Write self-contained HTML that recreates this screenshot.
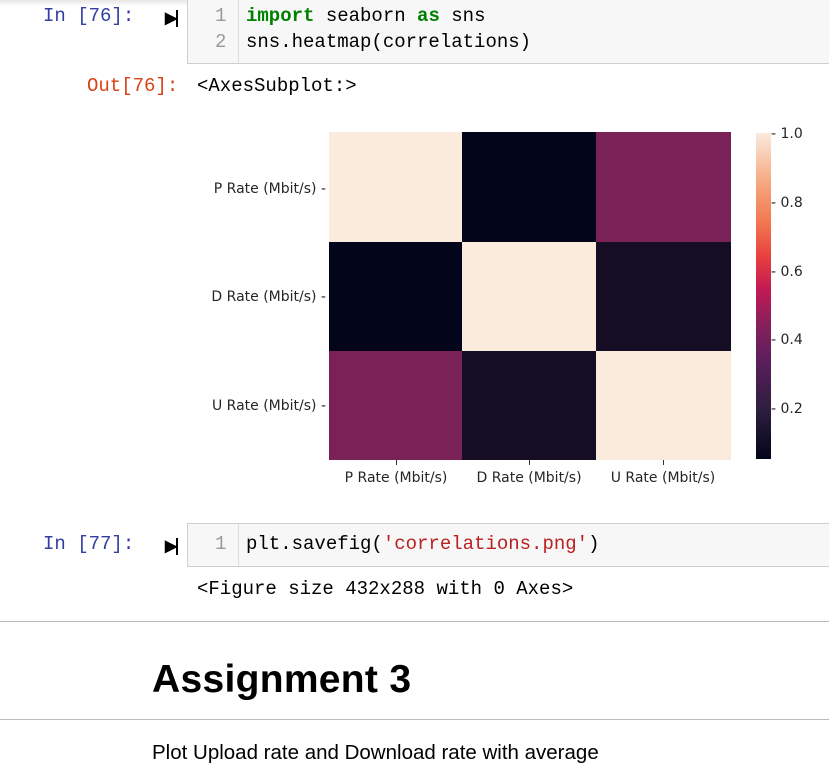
<!DOCTYPE html>
<html><head><meta charset="utf-8"><style>
body{margin:0;width:829px;height:760px;background:#fff;position:relative;overflow:hidden;font-family:"Liberation Sans",sans-serif}
.a{position:absolute;white-space:pre}
.m{font-family:"Liberation Mono",monospace;font-size:19px}
.t{font-family:"DejaVu Sans",sans-serif;font-size:14px;color:#262626}
.c{position:absolute}
</style></head><body>
<div class="c" style="left:0;top:0;width:829px;height:6px;background:linear-gradient(#e6e6e6,#fff)"></div>
<div class="a m" style="left:43px;top:5px;color:#303f9f">In [76]:</div>
<div class="a" style="left:165px;top:8px;font-size:16px;font-weight:bold">▶</div><div class="c" style="left:176px;top:10px;width:2px;height:17px;background:#000"></div>
<div class="c" style="left:187px;top:0;width:650px;height:63px;background:#f7f7f7;border:1px solid #cfcfcf;border-top:none"></div>
<div class="c" style="left:238px;top:0;width:1px;height:63px;background:#ddd"></div>
<div class="a m" style="left:215px;top:5px;color:#999">1</div>
<div class="a m" style="left:215px;top:31px;color:#999">2</div>
<div class="a m" style="left:246px;top:5px;color:#000"><b style="color:#008000">import</b> seaborn <b style="color:#008000">as</b> sns</div>
<div class="a m" style="left:246px;top:31px;color:#000">sns.heatmap(correlations)</div>
<div class="a m" style="left:87px;top:75px;color:#d84315">Out[76]:</div>
<div class="a m" style="left:197px;top:75px;color:#000">&lt;AxesSubplot:&gt;</div>

<div class="c" style="left:329px;top:132px;width:133px;height:110px;background:#faebdd"></div>
<div class="c" style="left:462px;top:132px;width:134px;height:110px;background:#03051a"></div>
<div class="c" style="left:596px;top:132px;width:135px;height:110px;background:#7a2257"></div>
<div class="c" style="left:329px;top:242px;width:133px;height:109px;background:#03051a"></div>
<div class="c" style="left:462px;top:242px;width:134px;height:109px;background:#faebdd"></div>
<div class="c" style="left:596px;top:242px;width:135px;height:109px;background:#140d24"></div>
<div class="c" style="left:329px;top:351px;width:133px;height:109px;background:#7a2257"></div>
<div class="c" style="left:462px;top:351px;width:134px;height:109px;background:#140d24"></div>
<div class="c" style="left:596px;top:351px;width:135px;height:109px;background:#faebdd"></div>
<div class="a t" style="right:503px;top:181px">P Rate (Mbit/s) -</div>
<div class="a t" style="right:503px;top:289px">D Rate (Mbit/s) -</div>
<div class="a t" style="right:503px;top:398px">U Rate (Mbit/s) -</div>
<div class="c" style="left:396px;top:460px;width:1px;height:5px;background:#333"></div>
<div class="c" style="left:529px;top:460px;width:1px;height:5px;background:#333"></div>
<div class="c" style="left:663px;top:460px;width:1px;height:5px;background:#333"></div>
<div class="a t" style="left:396px;top:470px;transform:translateX(-50%)">P Rate (Mbit/s)</div>
<div class="a t" style="left:529px;top:470px;transform:translateX(-50%)">D Rate (Mbit/s)</div>
<div class="a t" style="left:663px;top:470px;transform:translateX(-50%)">U Rate (Mbit/s)</div>
<div class="c" style="left:756px;top:133px;width:15px;height:326px;background:linear-gradient(to top,#03051a 0%,#2d1e3e 15%,#5a1f5c 30%,#8b1f5c 42%,#c21a55 52%,#e83f3f 62%,#f2754f 72%,#f6a47b 84%,#faebdd 100%)"></div>
<div class="a t" style="left:771px;top:126px">- 1.0</div>
<div class="a t" style="left:771px;top:195px">- 0.8</div>
<div class="a t" style="left:771px;top:264px">- 0.6</div>
<div class="a t" style="left:771px;top:332px">- 0.4</div>
<div class="a t" style="left:771px;top:401px">- 0.2</div>

<div class="a m" style="left:43px;top:533px;color:#303f9f">In [77]:</div>
<div class="a" style="left:165px;top:536px;font-size:16px;font-weight:bold">▶</div><div class="c" style="left:176px;top:538px;width:2px;height:17px;background:#000"></div>
<div class="c" style="left:187px;top:523px;width:650px;height:42px;background:#f7f7f7;border:1px solid #cfcfcf"></div>
<div class="c" style="left:238px;top:524px;width:1px;height:42px;background:#ddd"></div>
<div class="a m" style="left:215px;top:533px;color:#999">1</div>
<div class="a m" style="left:246px;top:533px;color:#000">plt.savefig(<span style="color:#ba2121">'correlations.png'</span>)</div>
<div class="a m" style="left:197px;top:578px;color:#000">&lt;Figure size 432x288 with 0 Axes&gt;</div>
<div class="c" style="left:0;top:621px;width:829px;height:1px;background:#bbb"></div>
<div class="a" style="left:152px;top:658px;font-size:39px;font-weight:bold;color:#000;letter-spacing:0.3px">Assignment 3</div>
<div class="c" style="left:0;top:719px;width:829px;height:1px;background:#bbb"></div>
<div class="a" style="left:152px;top:741px;font-size:20.5px;color:#000">Plot Upload rate and Download rate with average</div>
</body></html>
